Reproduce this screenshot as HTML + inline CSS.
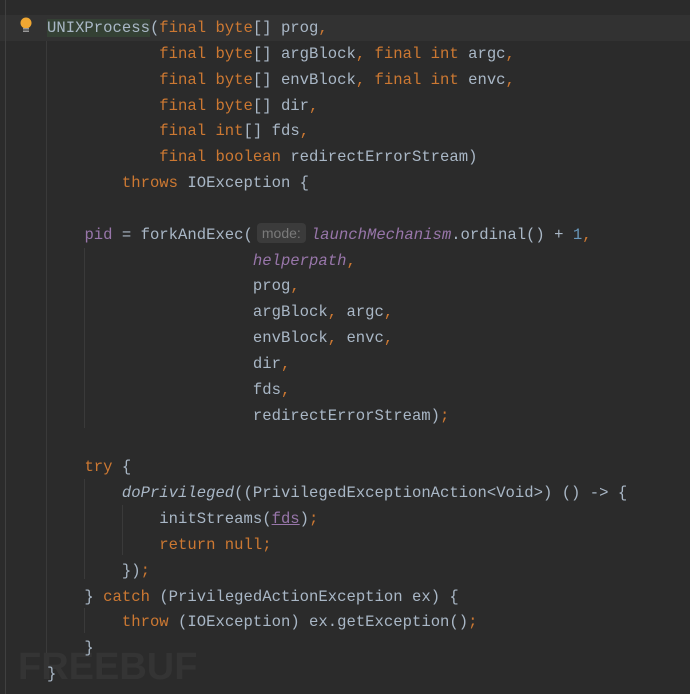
<!DOCTYPE html>
<html><head><meta charset="utf-8"><style>
html,body{margin:0;padding:0;background:#2b2b2b;width:690px;height:694px;overflow:hidden;position:relative}
.caret{position:absolute;left:0;top:15px;width:690px;height:26px;background:#323232}
.code{position:absolute;left:47px;top:16px;font-family:"Liberation Mono",monospace;font-size:15.6px;color:#a9b7c6}
.l{height:25.85px;line-height:25.85px;white-space:pre}
.k{color:#cc7832}.p{color:#9876aa;font-style:italic}.n{color:#6897bb}.i{font-style:italic}
.u{color:#9876aa;text-decoration:underline}
.hl{background:#344134}
.hint{display:inline-block;font-family:"Liberation Sans",sans-serif;font-size:14px;color:#7a7a7a;background:#3b3b3b;border-radius:4px;line-height:20px;padding:0 5px;margin:0 5px 0 4px;vertical-align:1px}
.g{position:absolute;width:1px;background:#3a3a3a}
.wm{position:absolute;left:18px;top:646px;font-family:"Liberation Sans",sans-serif;font-weight:bold;font-size:38px;line-height:42px;color:#343434}
</style></head><body>
<div class="caret"></div>
<div class="wm">FREEBUF</div>
<div class="g" style="left:5px;top:0;height:694px;background:#404040"></div>
<div class="g" style="left:46px;top:41px;height:612px"></div>
<div class="g" style="left:84px;top:248px;height:180px"></div>
<div class="g" style="left:84px;top:479px;height:100px"></div>
<div class="g" style="left:84px;top:608px;height:25px"></div>
<div class="g" style="left:122px;top:505px;height:50px"></div>
<svg style="position:absolute;left:17px;top:16px" width="18" height="20"><circle cx="9" cy="7" r="5.5" fill="#f0a732"/><rect x="6" y="12" width="6" height="1.5" fill="#999"/><rect x="6" y="14.5" width="6" height="1.5" fill="#999"/></svg>
<div class="code"><div class="l"><span class="hl">UNIXProcess</span>(<span class="k">final byte</span>[] prog<span class="k">,</span></div><div class="l">            <span class="k">final byte</span>[] argBlock<span class="k">, final int </span>argc<span class="k">,</span></div><div class="l">            <span class="k">final byte</span>[] envBlock<span class="k">, final int </span>envc<span class="k">,</span></div><div class="l">            <span class="k">final byte</span>[] dir<span class="k">,</span></div><div class="l">            <span class="k">final int</span>[] fds<span class="k">,</span></div><div class="l">            <span class="k">final boolean </span>redirectErrorStream)</div><div class="l">        <span class="k">throws </span>IOException {</div><div class="l"> </div><div class="l">    <span style="color:#9876aa">pid</span> = forkAndExec(<span class="hint">mode:</span><span class="p">launchMechanism</span>.ordinal() + <span class="n">1</span><span class="k">,</span></div><div class="l">                      <span class="p">helperpath</span><span class="k">,</span></div><div class="l">                      prog<span class="k">,</span></div><div class="l">                      argBlock<span class="k">, </span>argc<span class="k">,</span></div><div class="l">                      envBlock<span class="k">, </span>envc<span class="k">,</span></div><div class="l">                      dir<span class="k">,</span></div><div class="l">                      fds<span class="k">,</span></div><div class="l">                      redirectErrorStream)<span class="k">;</span></div><div class="l"> </div><div class="l">    <span class="k">try </span>{</div><div class="l">        <span class="i">doPrivileged</span>((PrivilegedExceptionAction&lt;Void&gt;) () -&gt; {</div><div class="l">            initStreams(<span class="u">fds</span>)<span class="k">;</span></div><div class="l">            <span class="k">return null;</span></div><div class="l">        })<span class="k">;</span></div><div class="l">    } <span class="k">catch </span>(PrivilegedActionException ex) {</div><div class="l">        <span class="k">throw </span>(IOException) ex.getException()<span class="k">;</span></div><div class="l">    }</div><div class="l">}</div></div>
</body></html>
